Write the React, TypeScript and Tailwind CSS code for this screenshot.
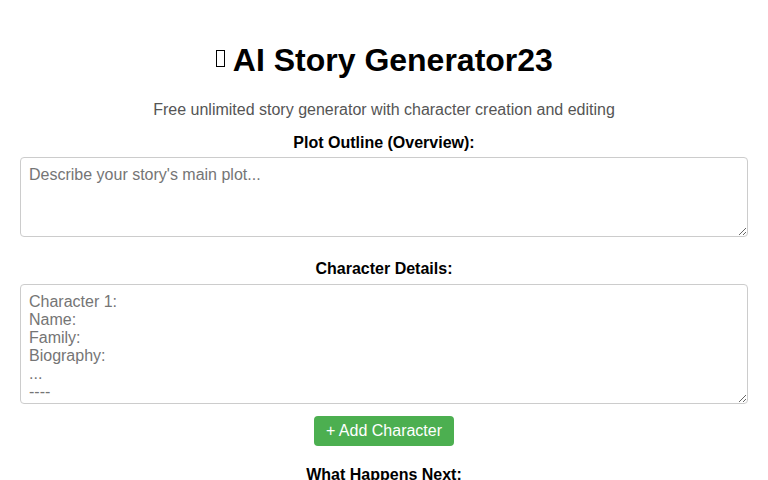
export default function App() {
  return (
    <main className="min-h-screen bg-white px-[20px] pt-[20px] font-['Liberation_Sans',Arial,sans-serif] text-black">
      <h1 className="mt-[22px] text-center text-[32px] font-bold leading-[37px]">
        {/* missing-glyph box, as in the screenshot */}
        <span className="ml-[1px] inline-block h-[17px] w-[9px] border-[1.5px] border-black align-[4px]" /> AI Story Generator23
      </h1>
      <p className="mt-[22px] text-center text-[16px] leading-[18px] text-[#555]">
        Free unlimited story generator with character creation and editing
      </p>

      {/* plot */}
      <label className="mt-[15px] block text-center text-[16px] font-bold leading-[18px]">Plot Outline (Overview):</label>
      <textarea
        className="mt-[5px] block h-[80px] w-full resize-y rounded-[4px] border border-[#ccc] px-[8px] py-[8px] text-[16px] leading-[18px] placeholder:text-[#757575]"
        placeholder="Describe your story's main plot..."
      />

      {/* characters */}
      <label className="mt-[23px] block text-center text-[16px] font-bold leading-[18px]">Character Details:</label>
      <textarea
        className="mt-[6px] block h-[120px] w-full resize-y rounded-[4px] border border-[#ccc] px-[8px] py-[8px] text-[16px] leading-[18px] placeholder:text-[#757575]"
        placeholder={'Character 1:\nName:\nFamily:\nBiography:\n...\n----'}
      />
      <div className="mt-[12px] flex justify-center">
        <button className="h-[30px] w-[140px] rounded-[4px] bg-[#4caf50] text-[16px] text-white">+ Add Character</button>
      </div>

      {/* next */}
      <label className="mt-[20px] block text-center text-[16px] font-bold leading-[18px]">What Happens Next:</label>
      <textarea
        className="mt-[6px] block h-[80px] w-full resize-y rounded-[4px] border border-[#ccc] px-[8px] py-[8px] text-[16px] leading-[18px] placeholder:text-[#757575]"
        placeholder="Describe what should happen next..."
      />
    </main>
  );
}
